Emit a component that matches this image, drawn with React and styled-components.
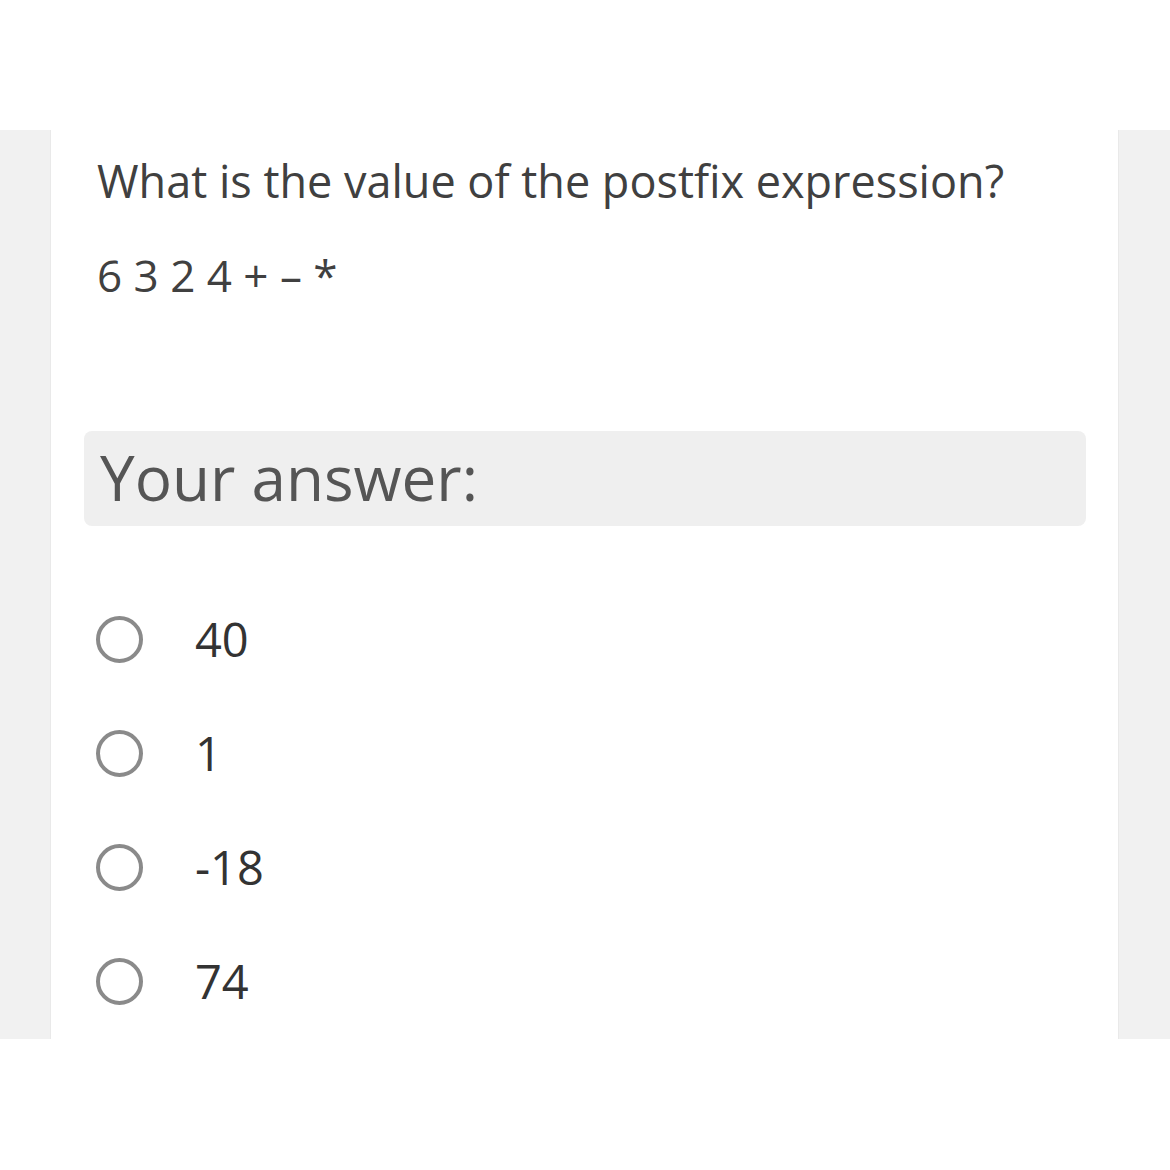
import React from 'react'
import styled, { createGlobalStyle } from 'styled-components'

const Global = createGlobalStyle`
  body {
    margin: 0;
    background: #ffffff;
    font-family: "Open Sans", "Noto Sans", sans-serif;
  }
`

const Page = styled.div`
  width: 1170px;
  height: 1170px;
  padding-top: 130px;
  box-sizing: border-box;
  background: #ffffff;
`

const Band = styled.div`
  display: flex;
  height: 909px;
  background: #f1f1f1;
  padding: 0 51px 0 50px;
`

const Card = styled.div`
  flex: 1;
  background: #ffffff;
  border-left: 1px solid #e9e9e9;
  border-right: 1px solid #e9e9e9;
  padding: 0 32px 0 33px;
  overflow: hidden;
`

const Question = styled.div`
  padding: 0 13px;
  color: #404040;
`

const Title = styled.h1`
  margin: 0;
  padding-top: 23px;
  font-size: 45px;
  font-weight: 400;
  line-height: 56px;
`

const Expr = styled.p`
  margin: 0;
  padding-top: 38px;
  font-size: 44px;
  line-height: 56px;
`

const AnswerBox = styled.div`
  margin-top: 128px;
  height: 95px;
  background: #efefef;
  border-radius: 8px;
  display: flex;
  align-items: center;
  padding: 0 16px 4px;
  box-sizing: border-box;
  color: #555555;
  font-size: 62px;
`

const Options = styled.div`
  margin-top: 78px;
  display: flex;
  flex-direction: column;
  gap: 44px;
  padding-left: 12px;
`

const Option = styled.label`
  display: flex;
  align-items: center;
  height: 70px;
  gap: 52px;
  color: #333333;
  font-size: 47px;
`

const Radio = styled.span`
  width: 39px;
  height: 39px;
  border-radius: 50%;
  border: 4px solid #8a8a8a;
  flex-shrink: 0;
`

const answers = ['40', '1', '-18', '74']

export default function App() {
  return (
    <Page>
      <Global />
      <Band>
        <Card>
          <Question>
            <Title>What is the value of the postfix expression?</Title>
            <Expr>6 3 2 4 + – *</Expr>
          </Question>
          <AnswerBox>Your answer:</AnswerBox>
          <Options>
            {answers.map(a => (
              <Option key={a}>
                <Radio />
                <span>{a}</span>
              </Option>
            ))}
          </Options>
        </Card>
      </Band>
    </Page>
  )
}
